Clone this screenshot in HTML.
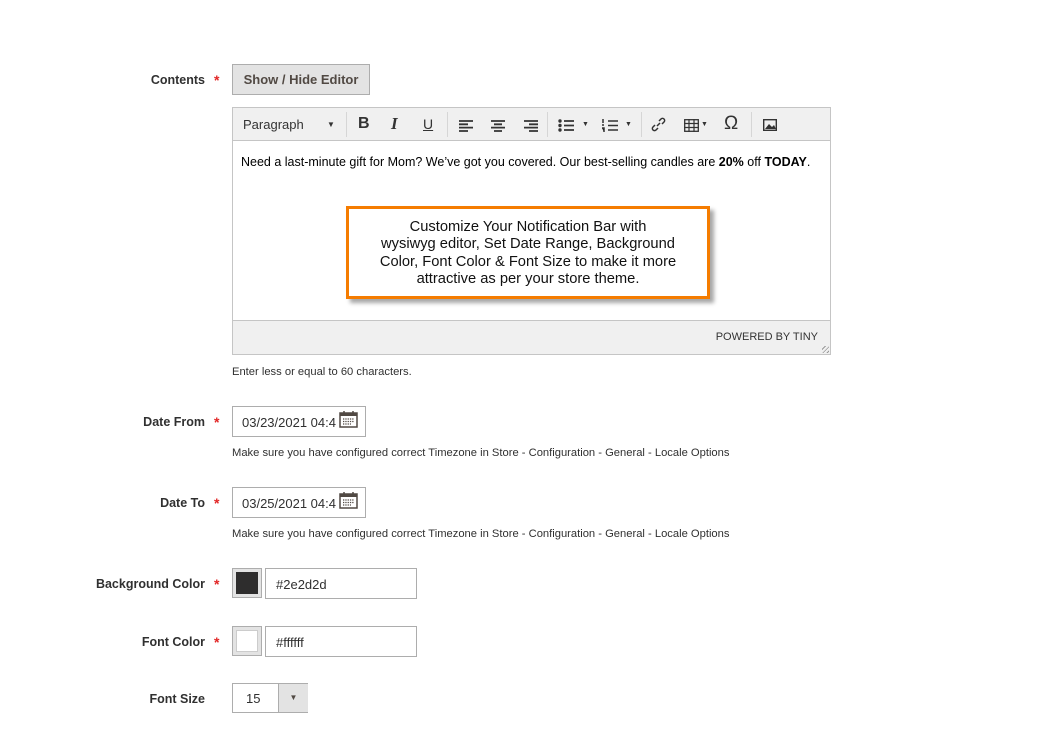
<!DOCTYPE html>
<html><head><meta charset="utf-8"><style>
body{margin:0;width:1042px;height:752px;background:#fff;position:relative;overflow:hidden;font-family:"Liberation Sans",sans-serif;color:#303030}
.a{position:absolute}
.lbl{position:absolute;right:837px;font-size:12.5px;font-weight:bold;color:#303030;text-align:right;white-space:nowrap}
.star{position:absolute;left:214px;color:#e22626;font-size:14px;font-weight:bold}
.note{position:absolute;left:232px;font-size:11.2px;color:#303030}
.inp{position:absolute;border:1px solid #adadad;background:#fff;box-sizing:border-box;font-size:13px;color:#303030}
.tb{position:absolute;top:0;height:32px;display:flex;align-items:center;justify-content:center;font-size:15px;color:#333}
.sep{position:absolute;top:4px;width:1px;height:25px;background:#d6d6d6}
</style></head><body>

<div class="lbl" style="top:73px">Contents</div><div class="star" style="top:72px">*</div>
<div class="a" style="left:232px;top:64px;width:138px;height:31px;box-sizing:border-box;border:1px solid #adadad;background:#e3e3e3;font-size:13px;font-weight:bold;color:#514943;text-align:center;line-height:29px">Show / Hide Editor</div>

<div class="a" style="left:232px;top:107px;width:599px;height:248px;box-sizing:border-box;border:1px solid #c5c5c5">
  <div class="a" style="left:0;top:0;width:597px;height:32px;background:#f0f0f0;border-bottom:1px solid #c5c5c5">
    <div class="tb" style="left:10px;font-size:13px">Paragraph</div>
    <div class="tb" style="left:94px;font-size:8px">▼</div>
    <div class="sep" style="left:113px"></div>
    <div class="tb" style="left:125px;font-weight:bold;font-size:16px">B</div>
    <div class="tb" style="left:158px;font-style:italic;font-weight:bold;font-family:'Liberation Serif',serif;font-size:17px">I</div>
    <div class="tb" style="left:190px;text-decoration:underline;font-size:14px">U</div>
    <div class="sep" style="left:214px"></div>
    <svg class="a" style="left:226px;top:12px" width="14" height="12"><path d="M0 1h14M0 4.3h9M0 7.6h14M0 11h9" stroke="#333" stroke-width="1.8"/></svg>
    <svg class="a" style="left:258px;top:12px" width="14" height="12"><path d="M0 1h14M3 4.3h8M0 7.6h14M3 11h8" stroke="#333" stroke-width="1.8"/></svg>
    <svg class="a" style="left:291px;top:12px" width="14" height="12"><path d="M0 1h14M5 4.3h9M0 7.6h14M5 11h9" stroke="#333" stroke-width="1.8"/></svg>
    <div class="sep" style="left:314px"></div>
    <svg class="a" style="left:325px;top:11px" width="16" height="13"><circle cx="2" cy="2" r="1.7" fill="#333"/><circle cx="2" cy="6.5" r="1.7" fill="#333"/><circle cx="2" cy="11" r="1.7" fill="#333"/><path d="M6 2h10M6 6.5h10M6 11h10" stroke="#333" stroke-width="1.8"/></svg>
    <div class="tb" style="left:349px;font-size:7px">▼</div>
    <svg class="a" style="left:369px;top:11px" width="16" height="13"><path d="M1 0v4M0 6h2M0 9h2v4M6 2h10M6 6.5h10M6 11h10" stroke="#333" stroke-width="1.5"/></svg>
    <div class="tb" style="left:392px;font-size:7px">▼</div>
    <div class="sep" style="left:408px"></div>
    <svg class="a" style="left:418px;top:9px" width="15" height="15"><path d="M6 9l3-3M4 8l-2 2a2 2 0 003 3l2-2M11 7l2-2a2 2 0 00-3-3L8 4" stroke="#333" stroke-width="1.5" fill="none"/></svg>
    <svg class="a" style="left:451px;top:11px" width="15" height="13"><rect x="0.7" y="0.7" width="13.6" height="11.6" fill="none" stroke="#333" stroke-width="1.3"/><path d="M0 4.5h15M0 8.5h15M5 0v13M10 0v13" stroke="#333" stroke-width="1.2"/></svg>
    <div class="tb" style="left:468px;font-size:7px">▼</div>
    <div class="tb" style="left:491px;font-size:19px">Ω</div>
    <div class="sep" style="left:518px"></div>
    <svg class="a" style="left:530px;top:11px" width="14" height="12"><rect x="0.7" y="0.7" width="12.6" height="10.6" fill="none" stroke="#333" stroke-width="1.4"/><path d="M2 10l4-5 3 3 2-2 2 4z" fill="#333"/></svg>
  </div>
  <div class="a" style="left:8px;top:47px;font-size:12.5px;color:#000;white-space:nowrap">Need a last-minute gift for Mom? We’ve got you covered. Our best-selling candles are <b>20%</b> off <b>TODAY</b>.</div>
  <div class="a" style="left:0;top:212px;width:597px;height:33px;background:#f0f0f0;border-top:1px solid #c5c5c5">
    <div class="a" style="right:12px;top:10px;font-size:11px;color:#333">POWERED BY TINY</div>
    <div class="a" style="right:1px;bottom:1px;width:7px;height:7px;background:repeating-linear-gradient(135deg,transparent 0 2px,#999 2px 3px)"></div>
  </div>
</div>

<div class="a" style="left:346px;top:206px;width:364px;height:93px;box-sizing:border-box;border:3px solid #f57c00;background:#fff;box-shadow:4px 4px 4px rgba(0,0,0,0.35);font-size:14.7px;color:#111;text-align:center;line-height:17.3px;padding-top:10px">Customize Your Notification Bar with<br>wysiwyg editor, Set Date Range, Background<br>Color, Font Color &amp; Font Size to make it more<br>attractive as per your store theme.</div>

<div class="note" style="top:366px">Enter less or equal to 60 characters.</div>

<div class="lbl" style="top:415px">Date From</div><div class="star" style="top:414px">*</div>
<div class="inp" style="left:232px;top:406px;width:134px;height:31px;padding:8px 0 0 9px">03/23/2021 04:4</div>
<svg class="a" style="left:339px;top:410px" width="19" height="18"><rect x="1" y="3" width="17" height="14" fill="#fff" stroke="#514943" stroke-width="1.5"/><rect x="1" y="3" width="17" height="3" fill="#514943"/><path d="M5 1v4M14 1v4" stroke="#514943" stroke-width="1.5"/><path d="M4 9h11M4 11.5h11M4 14h8" stroke="#514943" stroke-width="1.3" stroke-dasharray="1.3 1"/></svg>
<div class="note" style="top:447px">Make sure you have configured correct Timezone in Store - Configuration - General - Locale Options</div>

<div class="lbl" style="top:496px">Date To</div><div class="star" style="top:495px">*</div>
<div class="inp" style="left:232px;top:487px;width:134px;height:31px;padding:8px 0 0 9px">03/25/2021 04:4</div>
<svg class="a" style="left:339px;top:491px" width="19" height="18"><rect x="1" y="3" width="17" height="14" fill="#fff" stroke="#514943" stroke-width="1.5"/><rect x="1" y="3" width="17" height="3" fill="#514943"/><path d="M5 1v4M14 1v4" stroke="#514943" stroke-width="1.5"/><path d="M4 9h11M4 11.5h11M4 14h8" stroke="#514943" stroke-width="1.3" stroke-dasharray="1.3 1"/></svg>
<div class="note" style="top:528px">Make sure you have configured correct Timezone in Store - Configuration - General - Locale Options</div>

<div class="lbl" style="top:577px">Background Color</div><div class="star" style="top:576px">*</div>
<div class="a" style="left:232px;top:568px;width:30px;height:30px;box-sizing:border-box;border:1px solid #adadad;background:#e3e3e3;padding:3px"><div style="width:22px;height:22px;background:#2e2d2d"></div></div>
<div class="inp" style="left:265px;top:568px;width:152px;height:31px;padding:8px 0 0 10px">#2e2d2d</div>

<div class="lbl" style="top:635px">Font Color</div><div class="star" style="top:634px">*</div>
<div class="a" style="left:232px;top:626px;width:30px;height:30px;box-sizing:border-box;border:1px solid #adadad;background:#e3e3e3;padding:3px"><div style="width:20px;height:20px;background:#fff;border:1px solid #ccc"></div></div>
<div class="inp" style="left:265px;top:626px;width:152px;height:31px;padding:8px 0 0 10px">#ffffff</div>

<div class="lbl" style="top:692px">Font Size</div>
<div class="inp" style="left:232px;top:683px;width:76px;height:30px;padding:7px 0 0 13px">15</div>
<div class="a" style="left:278px;top:684px;width:29px;height:28px;background:#e3e3e3;border-left:1px solid #adadad;font-size:8px;color:#514943;text-align:center;line-height:28px">▼</div>
</body></html>
